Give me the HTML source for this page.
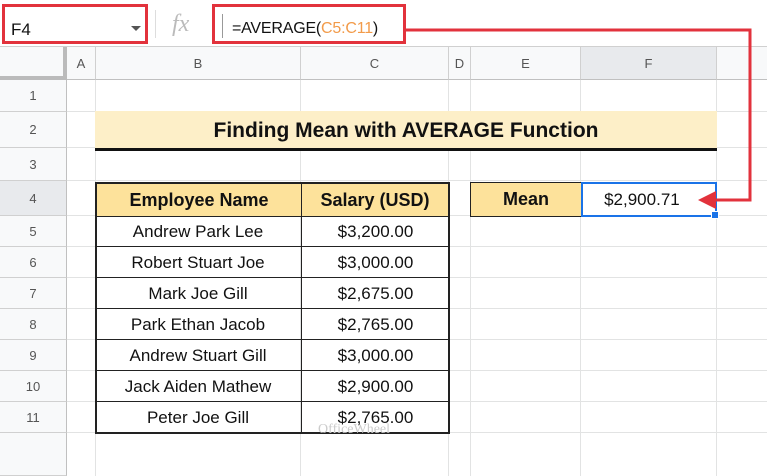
<!DOCTYPE html>
<html><head><style>
*{margin:0;padding:0;box-sizing:border-box}
body{width:767px;height:476px;overflow:hidden;background:#fff;font-family:"Liberation Sans",Arial,sans-serif;position:relative}
.a{position:absolute}
.vl{position:absolute;width:1px;background:#e2e3e3}
.hl{position:absolute;height:1px;background:#e2e3e3}
.rh{position:absolute;left:0;width:67px;text-align:center;font-size:13px;color:#555;border-bottom:1px solid #d0d0d0;background:#f8f9fa;border-right:1px solid #c0c0c0}
.ch{position:absolute;top:47px;height:33px;line-height:33px;text-align:center;font-size:13px;color:#555;border-right:1px solid #d0d0d0;background:#f8f9fa;border-bottom:1px solid #c0c0c0}
.c{position:absolute;text-align:center;font-size:17px;color:#111;border:1px solid #222}
</style></head><body>
<div class="a" style="left:0;top:0;width:767px;height:47px;background:#fff;border-bottom:1px solid #d0d0d0"></div>
<div class="a" style="left:2px;top:4px;width:146px;height:40px;border:3px solid #e2323c"></div>
<div class="a" style="left:11px;top:20px;font-size:17px;color:#111">F4</div>
<div class="a" style="left:131px;top:26px;width:0;height:0;border-left:5px solid transparent;border-right:5px solid transparent;border-top:5px solid #555"></div>
<div class="a" style="left:155px;top:10px;width:1px;height:28px;background:#ddd"></div>
<div class="a" style="left:172px;top:11px;font-family:'Liberation Serif',serif;font-style:italic;font-size:24px;color:#bbb">fx</div>
<div class="a" style="left:212px;top:4px;width:194px;height:40px;border:3px solid #e2323c"></div>
<div class="a" style="left:222px;top:14px;width:1px;height:24px;background:#999"></div>
<div class="a" style="left:232px;top:20px;font-size:16px;color:#111;letter-spacing:-0.2px">=AVERAGE(<span style="color:#f29b4a">C5:C11</span>)</div>
<div class="a" style="left:0;top:47px;width:67px;height:33px;background:#f8f9fa;border-right:4px solid #bbb;border-bottom:4px solid #bbb"></div>
<div class="ch" style="left:67px;width:29px">A</div>
<div class="ch" style="left:96px;width:205px">B</div>
<div class="ch" style="left:301px;width:148px">C</div>
<div class="ch" style="left:449px;width:22px">D</div>
<div class="ch" style="left:471px;width:110px">E</div>
<div class="ch" style="left:581px;width:136px;background:#e8eaed">F</div>
<div class="ch" style="left:717px;width:60px"></div>
<div class="rh" style="top:80px;height:32px;line-height:32px">1</div>
<div class="rh" style="top:112px;height:36px;line-height:36px">2</div>
<div class="rh" style="top:148px;height:33px;line-height:33px">3</div>
<div class="rh" style="top:181px;height:35px;line-height:35px;background:#e8eaed">4</div>
<div class="rh" style="top:216px;height:31px;line-height:31px">5</div>
<div class="rh" style="top:247px;height:31px;line-height:31px">6</div>
<div class="rh" style="top:278px;height:31px;line-height:31px">7</div>
<div class="rh" style="top:309px;height:31px;line-height:31px">8</div>
<div class="rh" style="top:340px;height:31px;line-height:31px">9</div>
<div class="rh" style="top:371px;height:31px;line-height:31px">10</div>
<div class="rh" style="top:402px;height:31px;line-height:31px">11</div>
<div class="rh" style="top:433px;height:43px"></div>
<div class="vl" style="left:95px;top:80px;height:396px"></div>
<div class="vl" style="left:300px;top:80px;height:396px"></div>
<div class="vl" style="left:448px;top:80px;height:396px"></div>
<div class="vl" style="left:470px;top:80px;height:396px"></div>
<div class="vl" style="left:580px;top:80px;height:396px"></div>
<div class="vl" style="left:716px;top:80px;height:396px"></div>
<div class="hl" style="left:67px;top:111px;width:700px"></div>
<div class="hl" style="left:67px;top:147px;width:700px"></div>
<div class="hl" style="left:67px;top:180px;width:700px"></div>
<div class="hl" style="left:67px;top:215px;width:700px"></div>
<div class="hl" style="left:67px;top:246px;width:700px"></div>
<div class="hl" style="left:67px;top:277px;width:700px"></div>
<div class="hl" style="left:67px;top:308px;width:700px"></div>
<div class="hl" style="left:67px;top:339px;width:700px"></div>
<div class="hl" style="left:67px;top:370px;width:700px"></div>
<div class="hl" style="left:67px;top:401px;width:700px"></div>
<div class="hl" style="left:67px;top:432px;width:700px"></div>
<div class="a" style="left:95px;top:111px;width:622px;height:40px;background:#fdefc8;border-bottom:3px solid #111;text-align:center;line-height:40px;font-weight:bold;font-size:21px;color:#111">Finding Mean with AVERAGE Function</div>
<div class="c" style="left:95px;top:182px;width:207px;height:35px;line-height:33px;background:#fde29b;font-weight:bold;border-width:2px 1px 1px 2px;font-size:18px">Employee Name</div>
<div class="c" style="left:301px;top:182px;width:149px;height:35px;line-height:33px;background:#fde29b;font-weight:bold;border-width:2px 2px 1px 1px;font-size:18px">Salary (USD)</div>
<div class="a" style="left:95px;top:216px;width:355px;height:218px;border:1px solid #222;border-width:0 2px 2px 2px"></div>
<div class="a" style="left:301px;top:216px;width:1px;height:217px;background:#222"></div>
<div class="a" style="left:95px;top:216px;width:355px;font-size:17px;color:#111">
<div style="display:flex;height:31px;line-height:31px;border-bottom:1px solid #222"><div style="width:206px;text-align:center">Andrew Park Lee</div><div style="flex:1;text-align:center">$3,200.00</div></div>
<div style="display:flex;height:31px;line-height:31px;border-bottom:1px solid #222"><div style="width:206px;text-align:center">Robert Stuart Joe</div><div style="flex:1;text-align:center">$3,000.00</div></div>
<div style="display:flex;height:31px;line-height:31px;border-bottom:1px solid #222"><div style="width:206px;text-align:center">Mark Joe Gill</div><div style="flex:1;text-align:center">$2,675.00</div></div>
<div style="display:flex;height:31px;line-height:31px;border-bottom:1px solid #222"><div style="width:206px;text-align:center">Park Ethan Jacob</div><div style="flex:1;text-align:center">$2,765.00</div></div>
<div style="display:flex;height:31px;line-height:31px;border-bottom:1px solid #222"><div style="width:206px;text-align:center">Andrew Stuart Gill</div><div style="flex:1;text-align:center">$3,000.00</div></div>
<div style="display:flex;height:31px;line-height:31px;border-bottom:1px solid #222"><div style="width:206px;text-align:center">Jack Aiden Mathew</div><div style="flex:1;text-align:center">$2,900.00</div></div>
<div style="display:flex;height:31px;line-height:31px"><div style="width:206px;text-align:center">Peter Joe Gill</div><div style="flex:1;text-align:center">$2,765.00</div></div>
</div>
<div class="c" style="left:470px;top:182px;width:112px;height:35px;line-height:32px;background:#fde29b;font-weight:bold;border-width:1px;font-size:18px">Mean</div>
<div class="a" style="left:581px;top:182px;width:136px;height:35px;border:2px solid #1a73e8;text-align:center;line-height:31px;font-size:17px;color:#111">$2,900.71&nbsp;&nbsp;&nbsp;</div>
<div class="a" style="left:711px;top:211px;width:8px;height:8px;background:#1a73e8;border:1px solid #fff"></div>
<svg class="a" style="left:0;top:0" width="767" height="476">
<polyline points="406,30 750,30 750,200 712,200" fill="none" stroke="#e2323c" stroke-width="3"/>
<polygon points="698,200 716,191 716,209" fill="#e2323c"/>
</svg>
<div class="a" style="left:318px;top:422px;font-size:14px;color:#ccc;font-family:'Liberation Serif',serif">OfficeWheel</div>
</body></html>
